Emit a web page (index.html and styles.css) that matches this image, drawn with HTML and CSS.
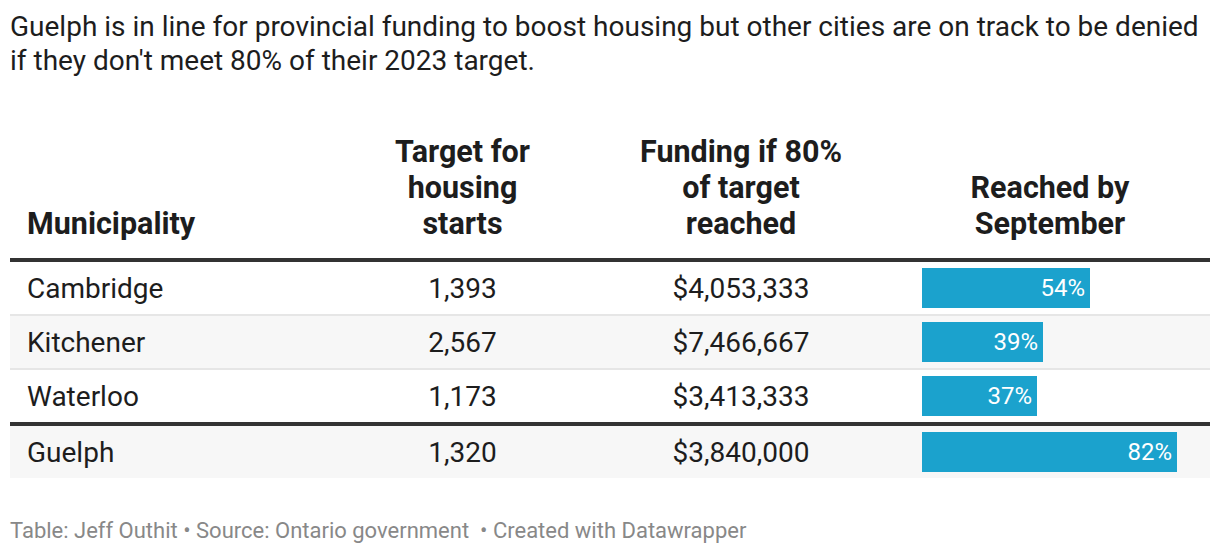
FILE: index.html
```html
<!DOCTYPE html>
<html>
<head>
<meta charset="utf-8">
<link rel="stylesheet" href="styles.css">
</head>
<body>
<div class="chart">
  <p class="title">Guelph is in line for provincial funding to boost housing but other cities are on track to be denied if they don't meet 80% of their 2023 target.</p>
  <div class="table">
    <div class="row head">
      <div class="cell c1">Municipality</div>
      <div class="cell c2">Target for<br>housing<br>starts</div>
      <div class="cell c3">Funding if 80%<br>of target<br>reached</div>
      <div class="cell c4">Reached by<br>September</div>
    </div>
    <div class="row">
      <div class="cell c1">Cambridge</div>
      <div class="cell c2">1,393</div>
      <div class="cell c3">$4,053,333</div>
      <div class="cell c4"><div class="bar" style="width:168px">54%</div></div>
    </div>
    <div class="row alt">
      <div class="cell c1">Kitchener</div>
      <div class="cell c2">2,567</div>
      <div class="cell c3">$7,466,667</div>
      <div class="cell c4"><div class="bar" style="width:121px">39%</div></div>
    </div>
    <div class="row last">
      <div class="cell c1">Waterloo</div>
      <div class="cell c2">1,173</div>
      <div class="cell c3">$3,413,333</div>
      <div class="cell c4"><div class="bar" style="width:115px">37%</div></div>
    </div>
    <div class="row alt guelph">
      <div class="cell c1">Guelph</div>
      <div class="cell c2">1,320</div>
      <div class="cell c3">$3,840,000</div>
      <div class="cell c4"><div class="bar" style="width:255px">82%</div></div>
    </div>
  </div>
  <p class="footer">Table: Jeff Outhit • Source: Ontario government &nbsp;• Created with Datawrapper</p>
</div>
</body>
</html>
```

FILE: styles.css
```css
html, body {
  margin: 0;
  padding: 0;
  background: #fff;
}
body {
  font-family: Roboto, "Liberation Sans", sans-serif;
  color: #1d1d1d;
}
.chart {
  padding: 10px 10px 0 10px;
}
.title {
  margin: 0;
  font-size: 28px;
  line-height: 34px;
  color: #1d1d1d;
}
.table {
  margin-top: 56px;
}
.row {
  display: grid;
  grid-template-columns: 355px 195px 346px 304px;
  height: 52px;
  align-items: center;
  border-bottom: 2px solid #e6e6e6;
  font-size: 28px;
}
.row.alt {
  background: #f7f7f7;
}
.row.head {
  height: auto;
  align-items: end;
  border-bottom: 4px solid #333;
  font-weight: 700;
  font-size: 30.5px;
  line-height: 36px;
  padding-bottom: 16px;
}
.row.last {
  border-bottom: 4px solid #333;
}
.row.guelph {
  border-bottom: none;
}
.cell {
  white-space: nowrap;
}
.c1 {
  padding-left: 17px;
}
.c2 {
  text-align: center;
}
.c3 {
  text-align: center;
  padding-left: 16px;
}
.c4 {
  padding-left: 16px;
}
.head .c4 {
  text-align: center;
  padding-left: 0;
  padding-right: 16px;
}
.bar {
  height: 40px;
  background: #1ba2cd;
  color: #fff;
  font-size: 24px;
  line-height: 40px;
  text-align: right;
  padding-right: 5px;
  box-sizing: border-box;
}
.footer {
  margin: 40px 0 0 0;
  font-size: 22px;
  line-height: 26px;
  color: #888;
}
```
